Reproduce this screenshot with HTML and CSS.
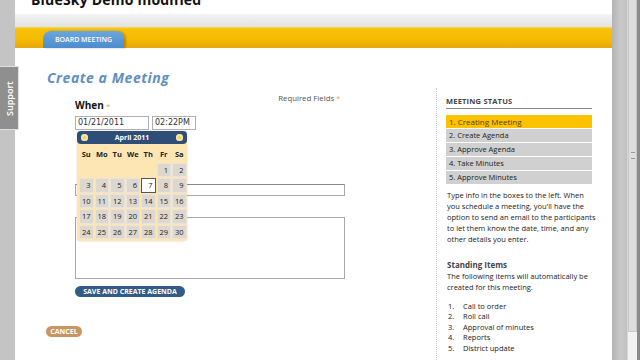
FILE: index.html
```html
<!DOCTYPE html>
<html>
<head>
<meta charset="utf-8">
<link rel="stylesheet" href="styles.css">
</head>
<body>
<div class="page">
  <div class="leftstrip"></div>
  <div class="support"><span>Support</span></div>
  <div class="main">
    <div class="header"><div class="apptitle">BlueSky Demo modified</div></div>
    <div class="band"></div>
    <div class="yellowbar"><div class="tab">BOARD MEETING</div></div>
    <div class="content">
      <div class="formcol">
        <div class="titlerow">
          <h1 class="pagetitle">Create a Meeting</h1>
        </div>
        <div class="form">
          <div class="whenrow">
            <div class="label">When <span class="req">*</span></div>
            <div class="reqfields">Required Fields <span class="req">*</span></div>
          </div>
          <div class="inputs">
            <div class="inp date">01/21/2011</div>
            <div class="inp time">02:22PM</div>
          </div>
          <div class="label hidden">Title</div>
          <div class="textinput"></div>
          <div class="label hidden">Description</div>
          <div class="textarea"></div>
          <div class="btn save">SAVE AND CREATE AGENDA</div>
          <div class="calendar">
            <div class="calhead">
              <span class="navbtn"></span>
              <span class="month">April 2011</span>
              <span class="navbtn"></span>
            </div>
            <div class="calgrid">
              <div class="dn">Su</div><div class="dn">Mo</div><div class="dn">Tu</div><div class="dn">We</div><div class="dn">Th</div><div class="dn">Fr</div><div class="dn">Sa</div>
              <div class="empty"></div><div class="empty"></div><div class="empty"></div><div class="empty"></div><div class="empty"></div>
              <div class="d">1</div><div class="d">2</div>
              <div class="d">3</div><div class="d">4</div><div class="d">5</div><div class="d">6</div><div class="d today">7</div><div class="d">8</div><div class="d">9</div>
              <div class="d">10</div><div class="d">11</div><div class="d">12</div><div class="d">13</div><div class="d">14</div><div class="d">15</div><div class="d">16</div>
              <div class="d">17</div><div class="d">18</div><div class="d">19</div><div class="d">20</div><div class="d">21</div><div class="d">22</div><div class="d">23</div>
              <div class="d">24</div><div class="d">25</div><div class="d">26</div><div class="d">27</div><div class="d">28</div><div class="d">29</div><div class="d">30</div>
            </div>
          </div>
        </div>
        <div class="btn cancel">CANCEL</div>
      </div>
      <div class="sidecol">
        <div class="sidehead">MEETING STATUS</div>
        <div class="status">
          <div class="st active">1. Creating Meeting</div>
          <div class="st">2. Create Agenda</div>
          <div class="st">3. Approve Agenda</div>
          <div class="st">4. Take Minutes</div>
          <div class="st">5. Approve Minutes</div>
        </div>
        <p class="info">Type info in the boxes to the left. When you schedule a meeting, you'll have the option to send an email to the participants to let them know the date, time, and any other details you enter.</p>
        <div class="subhead">Standing Items</div>
        <p class="info2">The following items will automatically be created for this meeting.</p>
        <ol class="items">
          <li><span class="n">1.</span>Call to order</li>
          <li><span class="n">2.</span>Roll call</li>
          <li><span class="n">3.</span>Approval of minutes</li>
          <li><span class="n">4.</span>Reports</li>
          <li><span class="n">5.</span>District update</li>
        </ol>
      </div>
    </div>
  </div>
  <div class="scrollarea">
    <div class="panel"></div>
    <div class="track"><div class="thumb"><span class="grip"></span></div></div>
    <div class="edge"></div>
  </div>
</div>
</body>
</html>
```
FILE: styles.css
```css
html, body { margin: 0; padding: 0; }
body { width: 640px; height: 360px; overflow: hidden; background: #fff; font-family: "Open Sans", "DejaVu Sans", sans-serif; }
.page { display: flex; width: 640px; height: 360px; position: relative; }
.leftstrip { width: 15px; background: #c4c4c4; flex: none; }
.support { position: absolute; left: 0; top: 66px; width: 18px; height: 62px; background: #8f8f8f; border: 1px solid #e0e0e0; border-left: none; display: flex; align-items: center; justify-content: center; }
.support span { transform: rotate(-90deg); color: #fff; font-size: 9px; font-weight: 600; white-space: nowrap; }
.main { flex: 1; display: flex; flex-direction: column; min-width: 0; }
.header { height: 14px; overflow: hidden; background: #fff; }
.apptitle { font-family: "Open Sans", sans-serif; font-weight: 700; font-size: 14px; line-height: 14px; margin: -7px 0 0 16px; color: #111; letter-spacing: 0.2px; }
.band { height: 13px; background: linear-gradient(#f4f4f4, #e2e2e2); }
.yellowbar { height: 21px; background: linear-gradient(#fbd75a 0, #f8c20a 2px, #f5bb00 60%, #e7a710 100%); display: flex; align-items: flex-end; padding-left: 28px; }
.tab { width: 81px; height: 17px; background: linear-gradient(#6aa6e0, #4d8ccc); border-radius: 8px 8px 0 0; color: #fff; font-size: 7px; font-weight: 600; display: flex; align-items: center; justify-content: center; box-shadow: 2px 0 2px rgba(120,80,0,0.45); }
.content { flex: 1; display: flex; }
.formcol { width: 421px; flex: none; display: flex; flex-direction: column; }
.titlerow { padding: 21px 0 0 32px; }
.pagetitle { margin: 0; font-family: "Open Sans", sans-serif; font-style: italic; font-weight: 700; font-size: 14px; line-height: 18px; color: #5f8fbf; letter-spacing: 0.55px; }
.form { position: relative; padding-left: 60px; margin-top: 12px; width: 271px; }
.whenrow { display: flex; justify-content: space-between; align-items: flex-end; height: 14px; }
.label { font-weight: 700; font-size: 10px; color: #111; line-height: 12px; }
.req { color: #e8a040; font-size: 7px; font-weight: 400; }
.reqfields { font-size: 7.8px; color: #555; margin-right: 6px; transform: translateY(-10px); }
.inputs { display: flex; gap: 3px; margin-top: 3px; }
.inp { height: 12px; border: 1px solid #b0b0b0; font-size: 8px; line-height: 12px; color: #333; padding-left: 2px; font-family: "DejaVu Sans", sans-serif; }
.inp.date { width: 70px; }
.inp.time { width: 40px; }
.hidden { height: 16px; margin-top: 38px; visibility: hidden; }
.textinput { height: 10px; border: 1px solid #a8a8a8; border-top-color: #888; width: 268px; margin-top: 0; }
.textinput + .hidden { margin-top: 5px; }
.textarea { height: 60px; border: 1px solid #a8a8a8; width: 268px; margin-top: 0; }
.btn { color: #fff; font-weight: 700; font-size: 7px; border-radius: 6px; display: flex; align-items: center; justify-content: center; height: 11px; }
.save { width: 110px; background: #315b88; margin-top: 7px; }
.cancel { width: 36px; background: #c99660; margin: 29px 0 0 31px; }
.calendar { position: absolute; left: 62px; top: 32px; width: 110px; height: 110px; background: #fde6b4; border-radius: 4px; box-shadow: 0 0 2px rgba(200,170,110,0.6); }
.calhead { height: 13px; background: #2e4d78; border-radius: 4px; display: flex; align-items: center; justify-content: space-between; padding: 0 4px; }
.navbtn { width: 7px; height: 7px; border-radius: 50%; background: #e8d06a; box-shadow: inset 0 0 0 2px #f4e39a; }
.month { color: #fff; font-weight: 700; font-size: 7px; }
.calgrid { display: grid; grid-template-columns: repeat(7, 14.5px); grid-auto-rows: 14.5px; column-gap: 1px; row-gap: 1px; padding: 3px 2px 0 2px; }
.dn { font-weight: 700; font-size: 7.5px; color: #222; display: flex; align-items: center; justify-content: center; }
.d { background: #dcd8d0; border: 1px solid #ebe4d6; box-sizing: border-box; font-size: 7.5px; color: #222; display: flex; align-items: center; justify-content: flex-end; padding-right: 2px; }
.d.today { background: #fff; border: 1px solid #555; }
.sidecol { width: 147px; border-left: 1px dotted #c8c8c8; padding: 8px 20px 0 9px; font-size: 7.5px; color: #222; margin-top: 40px; }
.sidehead { font-weight: 700; font-size: 7.5px; color: #444; letter-spacing: 0.2px; padding-bottom: 2px; border-bottom: 1px solid #888; line-height: 10px; }
.status { margin-top: 6px; display: flex; flex-direction: column; gap: 1px; }
.st { height: 13px; background: #d0d0d0; line-height: 13px; padding-left: 3px; font-size: 7.5px; color: #222; }
.st.active { background: #fcc200; color: #5a3b00; font-size: 8px; }
.info { margin: 6px -6px 0 1px; line-height: 11px; }
.subhead { font-weight: 700; color: #444; font-size: 8px; margin: 15px 0 0 1px; line-height: 10px; }
.info2 { margin: 1px 0 0 1px; line-height: 11px; }
.items { list-style: none; margin: 8px 0 0 2px; padding: 0; line-height: 10.4px; }
.items .n { display: inline-block; width: 15px; }
.scrollarea { width: 28px; flex: none; display: flex; }
.panel { width: 16px; background: linear-gradient(90deg, #b4b4b4, #cacaca 60%, #c0c0c0); }
.track { width: 9px; background: #f2f2f2; border-left: 1px solid #d8d8d8; }
.thumb { height: 332px; background: #dedede; border: 1px solid #c8c8c8; border-top: none; box-sizing: border-box; position: relative; }
.grip { position: absolute; left: 2px; top: 152px; width: 4px; height: 5px; border-top: 1px solid #999; border-bottom: 1px solid #999; }
.edge { width: 3px; background: #8a8a8a; }
```
